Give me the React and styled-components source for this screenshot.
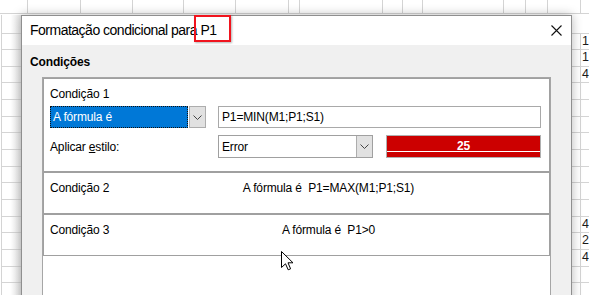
import React from "react";
import styled, { createGlobalStyle } from "styled-components";

const GlobalStyle = createGlobalStyle`
  html, body {
    margin: 0;
    padding: 0;
    background: #fff;
  }
  body {
    font-family: "Liberation Sans", Arial, sans-serif;
    color: #000;
  }
`;

const ROW = 16.667;
const GRID_LINE = "#d4d4d4";

const headerCols = [28, 53, 52, 51, 52, 53, 11, 83, 20, 20, 81, 22, 22, 33, 20];

const sheetCells = ["1", "1", "4", "", "", "", "", "", "", "", "", "4", "2", "4", "", ""];

const App = () => {
  return (
    <>
      <GlobalStyle />
      <Page>
        <HeaderStrip>
          {headerCols.map((w, i) => (
            <HeaderCell key={i} $width={w} />
          ))}
        </HeaderStrip>

        <LeftStrip>
          {sheetCells.map((_, i) => (
            <SheetRow key={i} />
          ))}
        </LeftStrip>

        <Dialog>
          <TitleBar>
            <Title>
              Formatação condicional para <Marked>P1</Marked>
            </Title>
            <CloseButton>
              <svg width="11" height="11" viewBox="0 0 11 11">
                <path d="M0.5 0.5 L10.5 10.5 M10.5 0.5 L0.5 10.5" stroke="#111" strokeWidth="1.1" fill="none" />
              </svg>
            </CloseButton>
          </TitleBar>

          <Body>
            <SectionLabel>Condições</SectionLabel>
            <ConditionList>
              <Condition $expanded>
                <ConditionLabel>Condição 1</ConditionLabel>
                <FormGrid>
                  <Combo $width={156} $height={22} $focused>
                    <ComboValue $focused>A fórmula é</ComboValue>
                    <ComboButton $focused>
                      <Chevron />
                    </ComboButton>
                  </Combo>
                  <FormulaInput>P1=MIN(M1;P1;S1)</FormulaInput>

                  <FieldLabel>
                    Aplicar <u>e</u>stilo:
                  </FieldLabel>
                  <Combo $width={155} $height={23}>
                    <ComboValue>Error</ComboValue>
                    <ComboButton>
                      <Chevron />
                    </ComboButton>
                  </Combo>
                  <Preview>
                    <PreviewText>25</PreviewText>
                  </Preview>
                </FormGrid>
              </Condition>

              <Condition>
                <SummaryRow>
                  <ConditionLabel $inline>Condição 2</ConditionLabel>
                  <Summary>{"A fórmula é  P1=MAX(M1;P1;S1)"}</Summary>
                </SummaryRow>
              </Condition>

              <Condition>
                <SummaryRow>
                  <ConditionLabel $inline>Condição 3</ConditionLabel>
                  <Summary>{"A fórmula é  P1>0"}</Summary>
                </SummaryRow>
              </Condition>
            </ConditionList>
          </Body>
        </Dialog>

        <RightStrip>
          {sheetCells.map((v, i) => (
            <SheetRow key={i}>
              <ShadowGap />
              <SheetValue>{v}</SheetValue>
            </SheetRow>
          ))}
        </RightStrip>

        <Cursor>
          <svg width="13" height="20" viewBox="0 0 13 20">
            <path
              d="M0.5 0.5 L0.5 16.5 L4.5 12.8 L7.2 18.8 L9.6 17.8 L7 11.8 L12 11.8 Z"
              fill="#fff"
              stroke="#000"
              strokeWidth="1"
            />
          </svg>
        </Cursor>
      </Page>
    </>
  );
};

const Chevron = () => (
  <svg width="9" height="5" viewBox="0 0 9 5">
    <path d="M0.5 0.5 L4.5 4.5 L8.5 0.5" stroke="#444" strokeWidth="1" fill="none" />
  </svg>
);

export default App;

const Page = styled.div`
  position: relative;
  width: 589px;
  height: 295px;
  overflow: hidden;
  display: grid;
  grid-template-columns: 21px 551px 1fr;
  grid-template-rows: 15px 1fr;
  background: #fff;
`;

const HeaderStrip = styled.div`
  grid-column: 1 / -1;
  display: flex;
  overflow: hidden;
`;

const HeaderCell = styled.div`
  flex: 0 0 ${(p) => p.$width}px;
  height: 14px;
  box-sizing: border-box;
  border-right: 1px solid ${GRID_LINE};
  border-bottom: 1px solid ${GRID_LINE};
`;

const LeftStrip = styled.div`
  display: flex;
  flex-direction: column;
  padding-top: 17.5px;
  margin-left: 1px;
  border-left: 1px solid ${GRID_LINE};
  overflow: hidden;
  background: linear-gradient(to right, #fff 45%, #e6e6e6);
`;

const RightStrip = styled.div`
  display: flex;
  flex-direction: column;
  padding-top: 17.5px;
  overflow: hidden;
`;

const SheetRow = styled.div`
  flex: 0 0 ${ROW}px;
  display: flex;
  box-sizing: border-box;
  border-top: 1px solid ${GRID_LINE};
`;

const ShadowGap = styled.div`
  flex: 0 0 8px;
`;

const SheetValue = styled.div`
  flex: 1;
  border-left: 1px solid ${GRID_LINE};
  padding-left: 1px;
  font-size: 12.5px;
  line-height: 15px;
  color: #1a1a1a;
  white-space: nowrap;
`;

const Dialog = styled.div`
  position: relative;
  z-index: 1;
  height: 300px;
  display: flex;
  flex-direction: column;
  box-sizing: border-box;
  border: 1px solid #8f8f8f;
  background: #f0f0f0;
  box-shadow: 0 0 10px rgba(0, 0, 0, 0.28);
`;

const TitleBar = styled.div`
  height: 29px;
  display: flex;
  align-items: center;
  padding-left: 8px;
  background: #fff;
`;

const Title = styled.div`
  font-size: 14px;
  letter-spacing: -0.5px;
  line-height: 17px;
  white-space: nowrap;
`;

const Marked = styled.span`
  position: relative;
  &::after {
    content: "";
    position: absolute;
    left: -6px;
    right: -14px;
    top: -7px;
    bottom: -4px;
    border: 2px solid #f0141e;
    box-shadow: 1px 1px 2px rgba(0, 0, 0, 0.3);
  }
`;

const CloseButton = styled.div`
  margin-left: auto;
  width: 30px;
  height: 29px;
  display: flex;
  align-items: center;
  justify-content: center;
`;

const Body = styled.div`
  flex: 1;
  display: flex;
  flex-direction: column;
  font-size: 12px;
  letter-spacing: -0.15px;
`;

const SectionLabel = styled.div`
  margin: 9px 0 0 8px;
  line-height: 16px;
  font-weight: bold;
`;

const ConditionList = styled.div`
  flex: 1;
  margin: 7px 20px 0;
  background: #fff;
  border: 1px solid #a6a6a6;
  border-bottom: none;
`;

const Condition = styled.div`
  height: ${(p) => (p.$expanded ? 85 : 33)}px;
  padding: 7px 7px 0 6px;
  border: 1px solid #a0a0a0;
`;

const ConditionLabel = styled.div`
  line-height: 16px;
  white-space: nowrap;
  ${(p) => (p.$inline ? "flex: 0 0 65px;" : "")}
`;

const FormGrid = styled.div`
  display: grid;
  grid-template-columns: 168px 168px 155px;
  grid-template-rows: 22px 23px;
  row-gap: 7px;
  margin-top: 4px;
  align-items: center;
`;

const Combo = styled.div`
  width: ${(p) => p.$width}px;
  height: ${(p) => p.$height}px;
  display: flex;
  box-sizing: border-box;
  gap: ${(p) => (p.$focused ? "1px" : "0")};
  border: ${(p) => (p.$focused ? "none" : "1px solid #a0a0a0")};
  background: #fff;
`;

const ComboValue = styled.div`
  flex: 1;
  display: flex;
  align-items: center;
  box-sizing: border-box;
  padding-left: ${(p) => (p.$focused ? "2px" : "3px")};
  color: ${(p) => (p.$focused ? "#fff" : "#000")};
  background: ${(p) => (p.$focused ? "#0078d7" : "#fff")};
  border: ${(p) => (p.$focused ? "1px dotted #111" : "none")};
`;

const ComboButton = styled.div`
  flex: 0 0 ${(p) => (p.$focused ? 17 : 16)}px;
  display: flex;
  align-items: center;
  justify-content: center;
  box-sizing: border-box;
  background: #e1e1e1;
  border: ${(p) => (p.$focused ? "1px solid #adadad" : "none")};
  border-left: 1px solid #adadad;
`;

const FormulaInput = styled.div`
  grid-column: 2 / 4;
  height: 22px;
  display: flex;
  align-items: center;
  box-sizing: border-box;
  padding-left: 3px;
  border: 1px solid #a9a9a9;
  white-space: nowrap;
`;

const FieldLabel = styled.div`
  line-height: 16px;
`;

const Preview = styled.div`
  position: relative;
  height: 23px;
  display: flex;
  justify-content: center;
  box-sizing: border-box;
  border: 1px solid #b0b0b0;
  background: #cc0000;
  &::before {
    content: "";
    position: absolute;
    left: 0;
    right: 0;
    top: 15px;
    height: 1px;
    background: #fff;
  }
`;

const PreviewText = styled.div`
  position: relative;
  margin-top: 3px;
  line-height: 14px;
  font-weight: bold;
  color: #fff;
`;

const SummaryRow = styled.div`
  display: flex;
`;

const Summary = styled.div`
  flex: 1;
  text-align: center;
  line-height: 16px;
  white-space: pre;
`;

const Cursor = styled.div`
  position: absolute;
  left: 281px;
  top: 251px;
  z-index: 2;
  width: 13px;
  height: 20px;
`;
